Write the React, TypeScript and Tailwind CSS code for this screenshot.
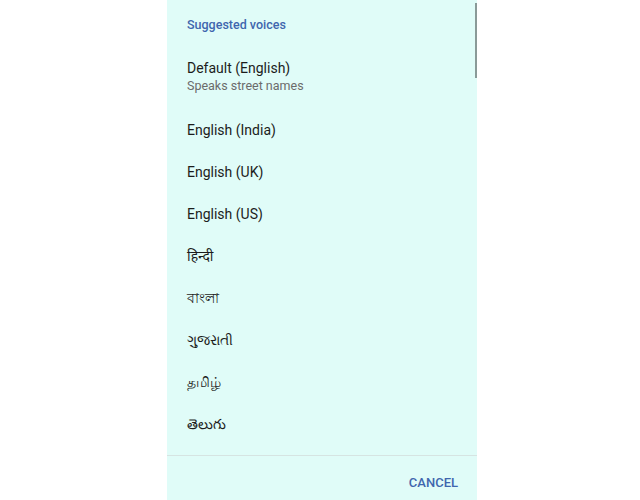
const VOICES = [
  "English (India)",
  "English (UK)",
  "English (US)",
  "हिन्दी",
  "বাংলা",
  "ગુજરાતી",
  "தமிழ்",
  "తెలుగు",
];

export default function App() {
  return (
    <div className="flex h-[500px] w-[640px] justify-center overflow-hidden bg-white font-['Roboto','Noto_Sans',sans-serif]">
      <div className="relative ml-[4px] flex w-[310px] shrink-0 flex-col bg-[#e0fcf8]">
        {/* scroll thumb */}
        <div className="absolute right-[0.5px] top-[3px] h-[75px] w-[1.5px] bg-[#8a9a98]" />

        <div className="h-[455px] shrink-0 overflow-hidden px-5">
          <p className="pt-[17px] text-[12.5px] font-medium leading-4 text-[#3f66ae]">
            Suggested voices
          </p>

          <div className="mt-[25px]">
            <p className="text-[14px] leading-5 text-[#1c1c1c]">Default (English)</p>
            <p className="text-[12.5px] leading-4 text-[#6b6b6b]">Speaks street names</p>
          </div>

          <ul className="mt-[26px] flex flex-col">
            {VOICES.map((voice) => (
              <li key={voice} className="h-[42px] text-[14px] leading-5 text-[#1c1c1c]">
                {voice}
              </li>
            ))}
          </ul>
        </div>

        <div className="flex h-[54px] shrink-0 items-center justify-end border-t border-[#d6e4e2] pr-[19px]">
          <span className="text-[13px] font-medium text-[#3f66ae]">CANCEL</span>
        </div>
      </div>
    </div>
  );
}
